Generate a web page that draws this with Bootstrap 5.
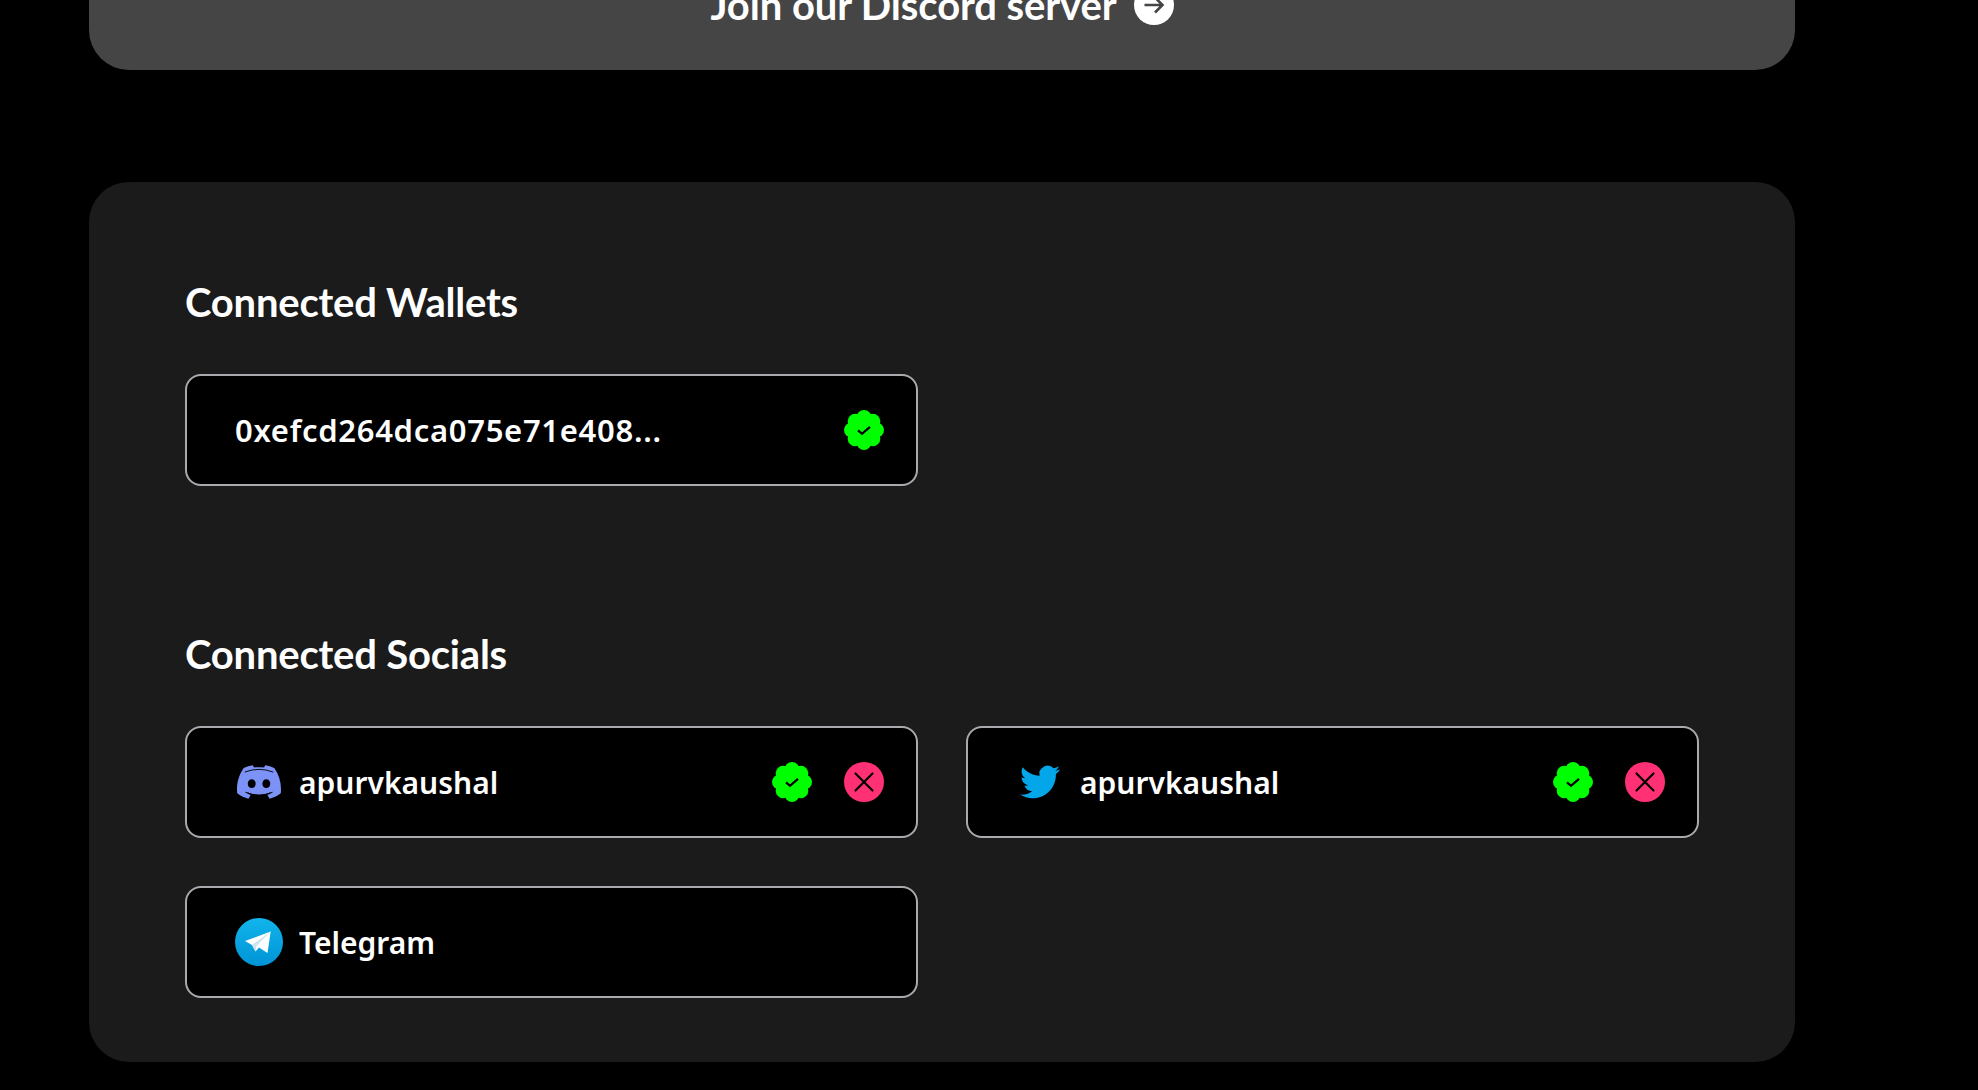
<!DOCTYPE html>
<html lang="en">
<head>
<meta charset="utf-8">
<title>Connected accounts</title>
<link href="https://cdn.jsdelivr.net/npm/bootstrap@5.3.0/dist/css/bootstrap.min.css" rel="stylesheet">
<style>
html,body{height:100%;background:#000;overflow:hidden}
body{color:#fff;font-family:"Noto Sans",sans-serif}
.page-shell{width:1706px;margin-left:89px}
.discord-banner{height:130px;margin-top:-60px;background:#454545;border-radius:40px;gap:17px;font-family:Lato,sans-serif;font-weight:700;font-size:40px;line-height:48px;letter-spacing:-.1px}
.arrow-dot{width:40px;height:40px;flex:none}
.settings-panel{margin-top:112px;background:#1b1b1b;border-radius:40px;padding:96px 96px 64px}
.sec-title{font-family:Lato,sans-serif;font-weight:700;font-size:40px;line-height:48px;letter-spacing:-.2px;margin:0 0 48px}
.sec-block + .sec-block{margin-top:144px}
.acct-grid{display:grid;grid-template-columns:733px 733px;gap:48px}
.acct-box{height:112px;background:#000;border:2px solid #a9a9ae;border-radius:16px;padding:0 32px 0 48px;gap:16px}
.acct-name{font-weight:600;font-size:30px;line-height:40px;flex:1 1 auto;padding-top:2px}
.acct-mono{font-size:31px;letter-spacing:.7px;padding-top:0}
.brand-box{width:48px;height:48px;flex:none}
.stat-set{gap:32px}
.stat-icon{width:40px;height:40px;flex:none;display:block}
</style>
</head>
<body>
<svg width="0" height="0" class="d-block" aria-hidden="true">
  <defs>
    <symbol id="ok" viewBox="0 0 40 40">
      <g fill="#0f0">
        <circle cx="20" cy="20" r="17"/>
        <circle cx="20" cy="7.5" r="7.5"/><circle cx="20" cy="32.5" r="7.5"/>
        <circle cx="7.5" cy="20" r="7.5"/><circle cx="32.5" cy="20" r="7.5"/>
        <circle cx="11.2" cy="11.2" r="7.5"/><circle cx="28.8" cy="11.2" r="7.5"/>
        <circle cx="11.2" cy="28.8" r="7.5"/><circle cx="28.8" cy="28.8" r="7.5"/>
      </g>
      <path d="M14 20.4l4 3.4 8-7" fill="none" stroke="#000" stroke-width="2.3"/>
    </symbol>
    <symbol id="no" viewBox="0 0 40 40">
      <circle cx="20" cy="20" r="20" fill="#ff3174"/>
      <path d="M11.5 11.5l17 17M28.5 11.5l-17 17" stroke="#000" stroke-width="2.2" stroke-linecap="round"/>
    </symbol>
    <linearGradient id="tg" x1="0" y1="0" x2="0" y2="1">
      <stop offset="0" stop-color="#12b4ec"/><stop offset="1" stop-color="#0094d6"/>
    </linearGradient>
  </defs>
</svg>
<main class="page-shell">
  <a class="discord-banner d-flex align-items-center justify-content-center text-white text-decoration-none" href="#">
    <span>Join our Discord server</span>
    <svg class="arrow-dot" viewBox="0 0 40 40"><circle cx="20" cy="20" r="20" fill="#fff"/><path d="M10.5 20h18M21 12.5l7.5 7.5-7.5 7.5" fill="none" stroke="#454545" stroke-width="2.6"/></svg>
  </a>
  <section class="settings-panel">
    <div class="sec-block">
      <h2 class="sec-title">Connected Wallets</h2>
      <div class="acct-grid">
        <div class="acct-box d-flex align-items-center">
          <span class="acct-name acct-mono">0xefcd264dca075e71e408...</span>
          <svg class="stat-icon"><use href="#ok"/></svg>
        </div>
      </div>
    </div>
    <div class="sec-block">
      <h2 class="sec-title">Connected Socials</h2>
      <div class="acct-grid">
        <div class="acct-box d-flex align-items-center">
          <svg class="brand-box" viewBox="0 0 48 48">
            <g transform="translate(2 2) scale(1.8333)">
              <path fill="#7d92f7" d="M20.317 4.3698a19.7913 19.7913 0 00-4.8851-1.5152.0741.0741 0 00-.0785.0371c-.211.3753-.4447.8648-.6083 1.2495-1.8447-.2762-3.68-.2762-5.4868 0-.1636-.3933-.4058-.8742-.6177-1.2495a.077.077 0 00-.0785-.037 19.7363 19.7363 0 00-4.8852 1.515.0699.0699 0 00-.0321.0277C.5334 9.0458-.319 13.5799.0992 18.0578a.0824.0824 0 00.0312.0561c2.0528 1.5076 4.0413 2.4228 5.9929 3.0294a.0777.0777 0 00.0842-.0276c.4616-.6304.8731-1.2952 1.226-1.9942a.076.076 0 00-.0416-.1057c-.6528-.2476-1.2743-.5495-1.8722-.8923a.077.077 0 01-.0076-.1277c.1258-.0943.2517-.1923.3718-.2914a.0743.0743 0 01.0776-.0105c3.9278 1.7933 8.18 1.7933 12.0614 0a.0739.0739 0 01.0785.0095c.1202.099.246.1981.3728.2924a.077.077 0 01-.0066.1276 12.2986 12.2986 0 01-1.873.8914.0766.0766 0 00-.0407.1067c.3604.698.7719 1.3628 1.225 1.9932a.076.076 0 00.0842.0286c1.961-.6067 3.9495-1.5219 6.0023-3.0294a.077.077 0 00.0313-.0552c.5004-5.177-.8382-9.6739-3.5485-13.6604a.061.061 0 00-.0312-.0286zM8.02 15.3312c-1.1825 0-2.1569-1.0857-2.1569-2.419 0-1.3332.9555-2.4189 2.157-2.4189 1.2108 0 2.1757 1.0952 2.1568 2.419 0 1.3332-.9555 2.4189-2.1569 2.4189zm7.9748 0c-1.1825 0-2.1569-1.0857-2.1569-2.419 0-1.3332.9554-2.4189 2.1569-2.4189 1.2108 0 2.1757 1.0952 2.1568 2.419 0 1.3332-.946 2.4189-2.1568 2.4189Z"/>
              <path d="M4.2 6.6Q12 3.6 19.8 6.6M4.6 17.6Q12 20.6 19.4 17.6" fill="none" stroke="#000" stroke-width=".5"/>
            </g>
          </svg>
          <span class="acct-name">apurvkaushal</span>
          <div class="stat-set d-flex">
            <svg class="stat-icon"><use href="#ok"/></svg>
            <svg class="stat-icon"><use href="#no"/></svg>
          </div>
        </div>
        <div class="acct-box d-flex align-items-center">
          <svg class="brand-box" viewBox="0 0 48 48">
            <g transform="translate(4 4) scale(1.6667)">
              <path fill="#03a6e8" d="M23.953 4.57a10 10 0 01-2.825.775 4.958 4.958 0 002.163-2.723c-.951.555-2.005.959-3.127 1.184a4.92 4.92 0 00-8.384 4.482C7.69 8.095 4.067 6.13 1.64 3.162a4.822 4.822 0 00-.666 2.475c0 1.71.87 3.213 2.188 4.096a4.904 4.904 0 01-2.228-.616v.06a4.923 4.923 0 003.946 4.827 4.996 4.996 0 01-2.212.085 4.936 4.936 0 004.604 3.417 9.867 9.867 0 01-6.102 2.105c-.39 0-.779-.023-1.17-.067a13.995 13.995 0 007.557 2.209c9.053 0 13.998-7.496 13.998-13.985 0-.21 0-.42-.015-.63A9.935 9.935 0 0024 4.59z"/>
            </g>
          </svg>
          <span class="acct-name">apurvkaushal</span>
          <div class="stat-set d-flex">
            <svg class="stat-icon"><use href="#ok"/></svg>
            <svg class="stat-icon"><use href="#no"/></svg>
          </div>
        </div>
        <div class="acct-box d-flex align-items-center">
          <svg class="brand-box" viewBox="0 0 48 48">
            <circle cx="24" cy="24" r="24" fill="url(#tg)"/>
            <path fill="#fff" d="M10 23L35.7 13.5 32.5 35 24 29.5 20.5 33.5 17 27z"/>
            <path fill="#cfe4f1" d="M17 27L35.7 13.5 21.5 28 20.5 33.5z"/>
          </svg>
          <span class="acct-name">Telegram</span>
        </div>
      </div>
    </div>
  </section>
</main>
</body>
</html>
